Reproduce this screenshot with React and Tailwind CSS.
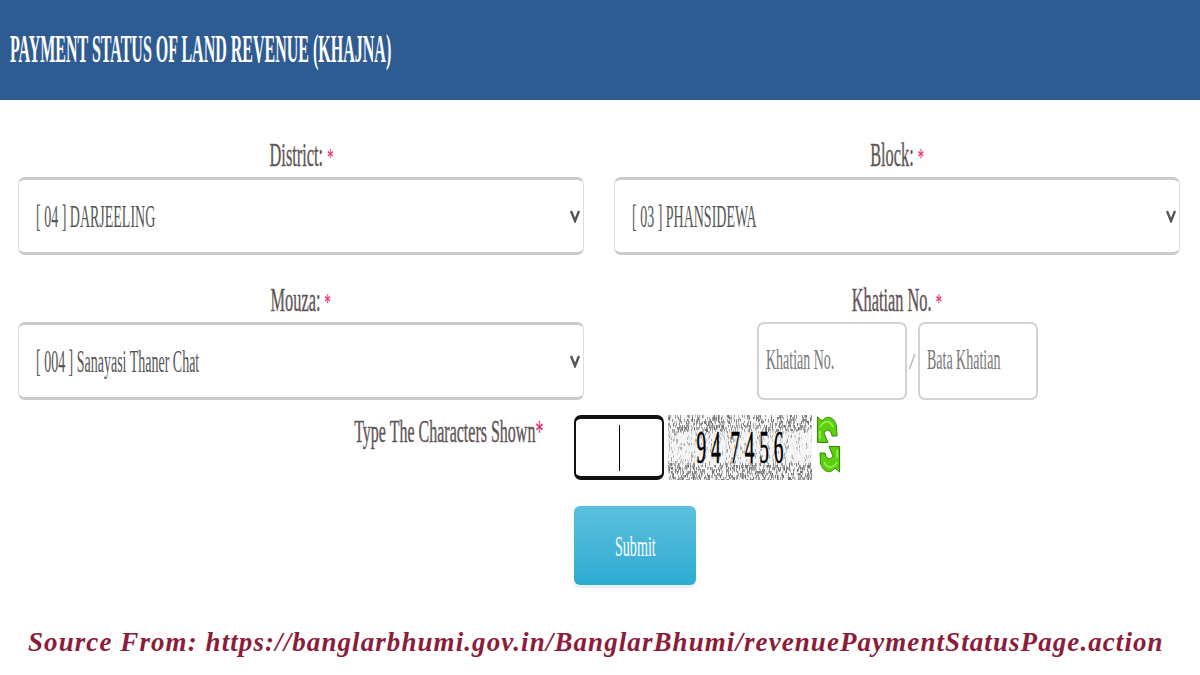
import React from "react";

const serif = "[font-family:'Liberation_Serif',serif]";

function Noise() {
  const cells = [];
  let seed = 7;
  const rnd = () => {
    seed = (seed * 16807) % 2147483647;
    return seed / 2147483647;
  };
  for (let y = 0; y < 65; y += 2) {
    for (let x = 0; x < 144; x += 1) {
      const v = rnd();
      const mid = y > 14 && y < 48;
      if (v < (mid ? 0.2 : 0.36)) {
        const g = Math.floor((mid ? 160 : 110) + rnd() * 80);
        cells.push(<rect key={x + "-" + y} x={x} y={y} width={1} height={2 + rnd() * 2} fill={`rgb(${g},${g},${g})`} />);
      }
    }
  }
  return (
    <svg viewBox="0 0 144 65" className="absolute inset-0 w-full h-full" aria-hidden="true">
      <rect width="144" height="65" fill="#f5f5f5" />
      {cells}
    </svg>
  );
}

const ARROW = "M0.5 2 L5 6 C9 0 17 1 19.5 11 L20 21 L15 21 C14 15 10 13 7 18 L11 27.5 L0.5 27.5 Z";
const SHINE = "M3 12 C7 5 13 5 16 12 M3 24 L3 16";

function Refresh() {
  return (
    <svg width="24" height="62" viewBox="0 0 24 62" aria-hidden="true">
      <path d={ARROW} fill="#5cd00c" stroke="#2f8a0a" strokeWidth="1" />
      <path d={SHINE} fill="none" stroke="#a4ee5e" strokeWidth="1.5" />
      <g transform="rotate(180 11.5 29.5)">
        <path d={ARROW} fill="#5cd00c" stroke="#2f8a0a" strokeWidth="1" />
        <path d={SHINE} fill="none" stroke="#a4ee5e" strokeWidth="1.5" />
      </g>
    </svg>
  );
}

function Label({ children }) {
  return (
    <div className="h-[44px] flex justify-center items-center">
      <span className={`${serif} whitespace-nowrap text-[34px] leading-none text-[#5f5555] scale-x-[0.48] [-webkit-text-stroke:0.4px_#5f5555]`}>
        {children} <span className="text-[#ec1065] text-[26px] [-webkit-text-stroke:0]">*</span>
      </span>
    </div>
  );
}

function Select({ value }) {
  return (
    <div className="h-[78px] flex items-center justify-between pl-[17px] pr-[3px] bg-white rounded-[7px] border border-[#dedede] border-t-[3px] border-t-[#cbcbcb] border-b-[3px] border-b-[#cbcbcb]">
      <span className={`${serif} whitespace-nowrap origin-left scale-x-[0.437] text-[32px] leading-none text-[#555]`}>{value}</span>
      <svg width="10" height="14" viewBox="0 0 10 14" aria-hidden="true">
        <path d="M1 2 L5 12 L9 2" fill="none" stroke="#555" strokeWidth="2.4" />
      </svg>
    </div>
  );
}

function TextBox({ text, className }) {
  return (
    <div className={`h-[78px] flex items-center pl-[7px] pb-[5px] rounded-[7px] border-2 border-[#d2d2d2] ${className}`}>
      <span className={`${serif} whitespace-nowrap origin-left scale-x-[0.466] text-[30px] leading-none text-[#777]`}>{text}</span>
    </div>
  );
}

export default function App() {
  return (
    <div className="w-[1200px] h-[675px] overflow-hidden bg-white">
      <header className="h-[100px] bg-[#2e5c92] flex items-center pl-[10px] pb-[3px]">
        <h1 className={`${serif} whitespace-nowrap origin-left scale-x-[0.4] text-[40px] leading-none font-bold text-white`}>
          PAYMENT STATUS OF LAND REVENUE (KHAJNA)
        </h1>
      </header>

      <main className="pl-[18px] pr-[20px] pt-[33px]">
        <div className="grid grid-cols-2 gap-x-[30px] gap-y-[23px]">
          <div>
            <Label>District:</Label>
            <Select value="[ 04 ] DARJEELING" />
          </div>
          <div>
            <Label>Block:</Label>
            <Select value="[ 03 ] PHANSIDEWA" />
          </div>
          <div>
            <Label>Mouza:</Label>
            <Select value="[ 004 ] Sanayasi Thaner Chat" />
          </div>
          <div>
            <Label>Khatian No.</Label>
            <div className="flex justify-center items-center">
              <TextBox text="Khatian No." className="w-[150px]" />
              <span className={`${serif} w-[11px] text-center text-[24px] text-[#aaa]`}>/</span>
              <TextBox text="Bata Khatian" className="w-[120px]" />
            </div>
          </div>
        </div>

        <div className="flex mt-[15px] h-[65px]">
          <div className="w-[556px] flex justify-end pr-[31px] h-[32px] items-center">
            <span className={`${serif} whitespace-nowrap origin-right scale-x-[0.5] text-[32px] leading-none text-[#5f5555] [-webkit-text-stroke:0.4px_#5f5555]`}>
              Type The Characters Shown<span className="text-[#ec1065] [-webkit-text-stroke:0]">*</span>
            </span>
          </div>
          <div className="relative w-[90px] h-[65px] rounded-[7px] border-x-2 border-y-4 border-[#111] bg-white">
            <div className="absolute left-[43px] top-[6px] h-[46px] w-px bg-black" />
          </div>
          <div className="relative w-[144px] h-[65px] ml-[4px] overflow-hidden">
            <Noise />
            <span className={`${serif} absolute inset-0 flex items-center justify-center whitespace-pre scale-x-[0.42] text-[46px] leading-none text-black [-webkit-text-stroke:0.6px_#000]`}>
              {"9 4  7 4 5 6"}
            </span>
          </div>
          <div className="ml-[5px]">
            <Refresh />
          </div>
        </div>

        <div className="ml-[556px] mt-[26px]">
          <button className="w-[122px] h-[79px] rounded-[6px] bg-gradient-to-b from-[#5bc0de] to-[#2aabd2] shadow-[0_3px_0_#eee] flex items-center justify-center">
            <span className={`${serif} whitespace-nowrap scale-x-[0.47] text-[30px] leading-none text-white`}>Submit</span>
          </button>
        </div>
      </main>

      <footer className="pt-[44px] pl-[28px]">
        <p className={`${serif} whitespace-nowrap italic font-bold text-[27px] leading-none tracking-[1.08px] text-[#8c1d3a]`}>
          Source From: https://banglarbhumi.gov.in/BanglarBhumi/revenuePaymentStatusPage.action
        </p>
      </footer>
    </div>
  );
}
